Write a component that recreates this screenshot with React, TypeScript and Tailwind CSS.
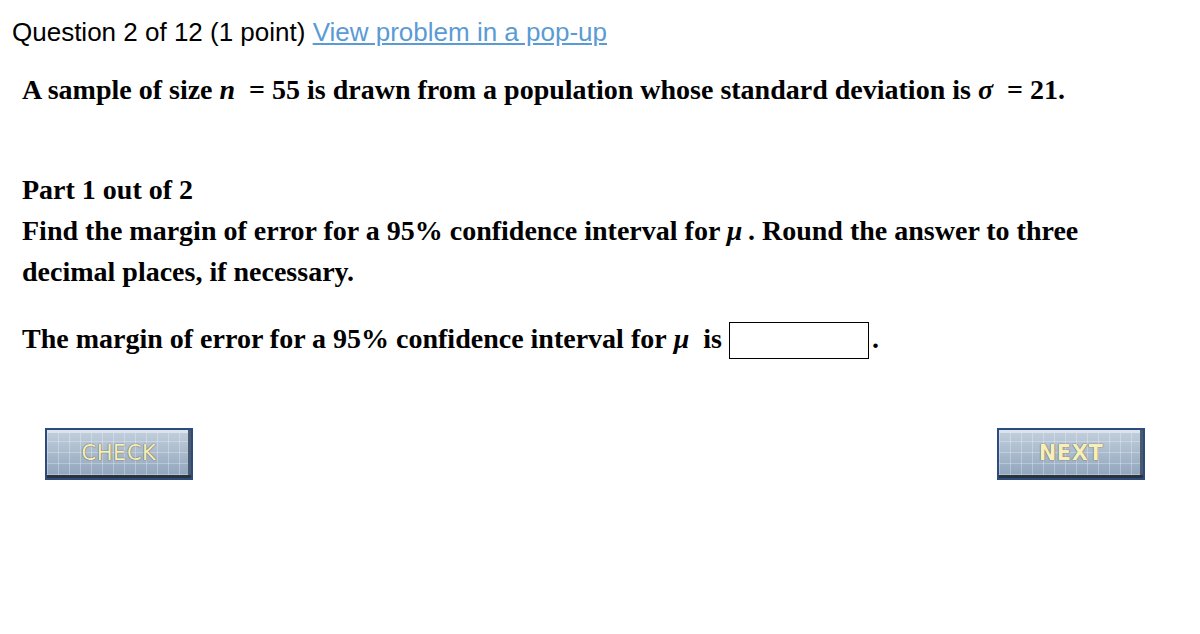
import React from "react";

const serif = { fontFamily: '"Liberation Serif", "Times New Roman", serif' };

function GridButton({ label, bold }: { label: string; bold?: boolean }) {
  return (
    <button
      className="relative h-[52px] w-[148px] overflow-hidden border-2 border-[#2b4c7c] bg-gradient-to-b from-[#c3d0dd] to-[#8ea3bb]"
    >
      <span className="absolute inset-0 bg-[linear-gradient(to_right,rgba(255,255,255,0.28)_1px,transparent_1px),linear-gradient(to_bottom,rgba(255,255,255,0.28)_1px,transparent_1px)] bg-[size:11px_11px]" />
      <span className="absolute inset-x-0 top-0 h-[3px] bg-[#dbe3ec]" />
      <span className="absolute inset-y-0 right-0 w-[3px] bg-[#4a5a6c]" />
      <span className="absolute inset-x-0 bottom-0 h-[3px] bg-[#2a323c]" />
      <span
        className={`relative text-[21px] tracking-wide text-[#f6eebb] [text-shadow:0_0_1px_#5f5e48,0_0_1px_#5f5e48] ${bold ? "font-bold" : ""}`}
        style={{ fontFamily: '"DejaVu Sans", Verdana, sans-serif' }}
      >
        {label}
      </span>
    </button>
  );
}

export default function App() {
  return (
    <div className="h-[634px] w-[1200px] bg-white text-black">
      <div className="pl-[12px] pt-[17px] text-[26px] leading-[30px]" style={{ fontFamily: '"Liberation Sans", Arial, sans-serif' }}>
        Question 2 of 12 (1 point){" "}
        <a href="#" className="text-[#5b9bd5] underline">View problem in a pop-up</a>
      </div>

      <div className="pl-[22px] pr-[40px] pt-[22px] text-[28px] font-bold leading-[41px]" style={serif}>
        <p>
          A sample of size <i>n</i> &nbsp;= 55 is drawn from a population whose standard deviation is <i>σ</i> &nbsp;= 21.
        </p>

        <p className="mt-[59px]">Part 1 out of 2</p>
        <p>
          Find the margin of error for a 95% confidence interval for <i>μ</i>&thinsp;. Round the answer to three decimal places, if necessary.
        </p>

        <p className="mt-[26px] flex items-center">
          The margin of error for a 95% confidence interval for&nbsp;<i>μ</i>&nbsp; is&nbsp;
          <input className="mt-[4px] h-[37px] w-[140px] border border-black bg-white px-1 text-[20px] font-normal outline-none" />
          <span className="ml-[3px]">.</span>
        </p>
      </div>

      <div className="mt-[69px] flex justify-between pl-[45px] pr-[55px]">
        <GridButton label="CHECK" />
        <GridButton label="NEXT" bold />
      </div>
    </div>
  );
}
